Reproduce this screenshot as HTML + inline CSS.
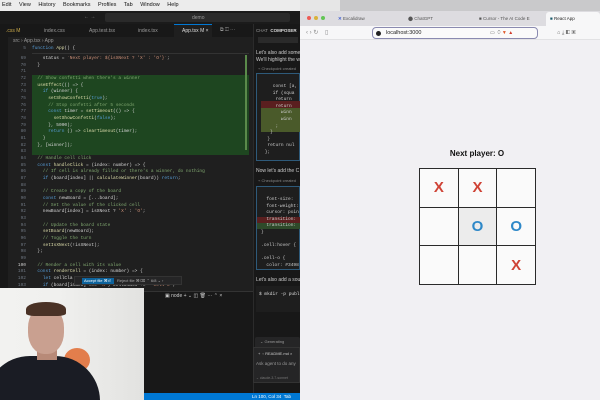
<!DOCTYPE html>
<html><head><meta charset="utf-8"><style>
*{margin:0;padding:0;box-sizing:border-box}
body{width:600px;height:400px;overflow:hidden;position:relative;background:#1f1f1f;font-family:"Liberation Sans",sans-serif}
.a{position:absolute}
.mono{font-family:"Liberation Mono",monospace}
.ln{position:absolute;left:0;width:26px;text-align:right;font-size:4.5px;color:#6e7681;font-family:"Liberation Mono",monospace}
.cd{position:absolute;left:32px;font-size:4.5px;color:#d4d4d4;white-space:pre;font-family:"Liberation Mono",monospace}
.cm{color:#7fa66f}
.kw{color:#569cd6}
.fn{color:#dcdcaa}
.st{color:#ce9178}
.t{font-size:5px;color:#bbb;white-space:nowrap}
.c{background:#fafafa;display:flex;align-items:center;justify-content:center;font-size:15px;font-weight:bold}
.x{color:#cf4336}.o{color:#2e88c8}
</style></head><body>
<div class="a" style="left:0;top:0;width:300px;height:11px;background:#ececec"></div>
<div class="a t" style="left:2px;top:2px;color:#111;font-size:5.5px;word-spacing:6px">Edit View History Bookmarks Profiles Tab Window Help</div>
<div class="a" style="left:0;top:11px;width:300px;height:13px;background:#1b1b1b"></div>
<div class="a" style="left:105px;top:13px;width:185px;height:9px;background:#2a2a2a;border-radius:2px"></div>
<div class="a t" style="left:192px;top:15px;color:#999">demo</div>
<div class="a t" style="left:84px;top:14px;color:#888">&larr; &rarr;</div>
<div class="a" style="left:0;top:24px;width:253px;height:13px;background:#181818"></div>
<div class="a" style="left:174px;top:24px;width:38px;height:13px;background:#1f1f1f;border-top:1px solid #0078d4"></div>
<div class="a t" style="left:6px;top:28px;color:#c8a84a">.css M</div>
<div class="a t" style="left:44px;top:28px;color:#999">index.css</div>
<div class="a t" style="left:89px;top:28px;color:#999">App.test.tsx</div>
<div class="a t" style="left:138px;top:28px;color:#999">index.tsx</div>
<div class="a t" style="left:182px;top:28px;color:#ddd">App.tsx M ×</div>
<div class="a t" style="left:220px;top:27px;color:#999">⧉ ◫ ···</div>
<div class="a t" style="left:13px;top:38px;color:#999">src › App.tsx › App</div>
<div class="a" style="left:0;top:37px;width:8px;height:256px;background:#181818"></div>
<div class="a" style="left:32px;top:75px;width:217px;height:80px;background:#1e4620"></div>
<div class="a" style="left:32px;top:46px;width:217px;height:8px;background:#1f1f1f;border-bottom:1px solid #333"></div>
<div class="a" style="left:245px;top:55px;width:2px;height:95px;background:#5a8a4a"></div>
<div class="ln" style="top:46px">5</div><div class="cd" style="top:46px"><span class="kw">function</span> <span class="fn">App</span>() {</div>
<div class="ln" style="top:56px">69</div><div class="cd" style="top:56px">    status = <span class="st">`Next player: ${isXNext ? 'X' : 'O'}`</span>;</div>
<div class="ln" style="top:62.7px">70</div><div class="cd" style="top:62.7px">  }</div>
<div class="ln" style="top:69.3px">71</div>
<div class="ln" style="top:76px">72</div><div class="cd cm" style="top:76px">  // Show confetti when there's a winner</div>
<div class="ln" style="top:82.7px">73</div><div class="cd" style="top:82.7px">  <span class="fn">useEffect</span>(() =&gt; {</div>
<div class="ln" style="top:89.3px">74</div><div class="cd" style="top:89.3px">    <span class="kw">if</span> (winner) {</div>
<div class="ln" style="top:96px">75</div><div class="cd" style="top:96px">      <span class="fn">setShowConfetti</span>(<span class="kw">true</span>);</div>
<div class="ln" style="top:102.7px">76</div><div class="cd cm" style="top:102.7px">      // Stop confetti after 5 seconds</div>
<div class="ln" style="top:109.3px">77</div><div class="cd" style="top:109.3px">      <span class="kw">const</span> timer = <span class="fn">setTimeout</span>(() =&gt; {</div>
<div class="ln" style="top:116px">78</div><div class="cd" style="top:116px">        <span class="fn">setShowConfetti</span>(<span class="kw">false</span>);</div>
<div class="ln" style="top:122.7px">79</div><div class="cd" style="top:122.7px">      }, 5000);</div>
<div class="ln" style="top:129.3px">80</div><div class="cd" style="top:129.3px">      <span class="kw">return</span> () =&gt; <span class="fn">clearTimeout</span>(timer);</div>
<div class="ln" style="top:136px">81</div><div class="cd" style="top:136px">    }</div>
<div class="ln" style="top:142.7px">82</div><div class="cd" style="top:142.7px">  }, [winner]);</div>
<div class="ln" style="top:149.3px">83</div>
<div class="ln" style="top:156px">84</div><div class="cd cm" style="top:156px">  // Handle cell click</div>
<div class="ln" style="top:162.7px">85</div><div class="cd" style="top:162.7px">  <span class="kw">const</span> <span class="fn">handleClick</span> = (index: number) =&gt; {</div>
<div class="ln" style="top:169.3px">86</div><div class="cd cm" style="top:169.3px">    // If cell is already filled or there's a winner, do nothing</div>
<div class="ln" style="top:176px">87</div><div class="cd" style="top:176px">    <span class="kw">if</span> (board[index] || <span class="fn">calculateWinner</span>(board)) <span class="kw">return</span>;</div>
<div class="ln" style="top:182.7px">88</div>
<div class="ln" style="top:189.3px">89</div><div class="cd cm" style="top:189.3px">    // Create a copy of the board</div>
<div class="ln" style="top:196px">90</div><div class="cd" style="top:196px">    <span class="kw">const</span> newBoard = [...board];</div>
<div class="ln" style="top:202.7px">91</div><div class="cd cm" style="top:202.7px">    // Set the value of the clicked cell</div>
<div class="ln" style="top:209.3px">92</div><div class="cd" style="top:209.3px">    newBoard[index] = isXNext ? <span class="st">'X'</span> : <span class="st">'O'</span>;</div>
<div class="ln" style="top:216px">93</div>
<div class="ln" style="top:222.7px">94</div><div class="cd cm" style="top:222.7px">    // Update the board state</div>
<div class="ln" style="top:229.3px">95</div><div class="cd" style="top:229.3px">    <span class="fn">setBoard</span>(newBoard);</div>
<div class="ln" style="top:236px">96</div><div class="cd cm" style="top:236px">    // Toggle the turn</div>
<div class="ln" style="top:242.7px">97</div><div class="cd" style="top:242.7px">    <span class="fn">setIsXNext</span>(!isXNext);</div>
<div class="ln" style="top:249.3px">98</div><div class="cd" style="top:249.3px">  };</div>
<div class="ln" style="top:256px">99</div>
<div class="ln" style="top:262.7px;color:#ccc">100</div><div class="cd cm" style="top:262.7px">  // Render a cell with its value</div>
<div class="ln" style="top:269.3px">101</div><div class="cd" style="top:269.3px">  <span class="kw">const</span> <span class="fn">renderCell</span> = (index: number) =&gt; {</div>
<div class="ln" style="top:276px">102</div><div class="cd" style="top:276px">    <span class="kw">let</span> cellCla</div>
<div class="ln" style="top:282.7px">103</div><div class="cd" style="top:282.7px">    <span class="kw">if</span> (board[index] === <span class="st">'X'</span>) cellClass += <span class="st">' cell-x'</span>;</div>
<div class="a" style="left:74px;top:276px;width:108px;height:9px;background:#252526;border:1px solid #333"></div>
<div class="a" style="left:82px;top:277.5px;width:32px;height:6px;background:#0e639c"></div>
<div class="a t" style="left:84px;top:278px;font-size:4px;color:#fff">Accept file ⌘⏎</div>
<div class="a t" style="left:117px;top:278px;font-size:4px;color:#aaa">Reject file ⌘⌫ ⌃ 6/8 ⌄ ›</div>
<div class="a" style="left:144px;top:291px;width:109px;height:102px;background:#181818;border-top:1px solid #333"></div>
<div class="a t" style="left:165px;top:293px;color:#ccc">▣ node + ⌄ ◫ 🗑 ··· ⌃ ×</div>
<div class="a" style="left:144px;top:393px;width:156px;height:7px;background:#0078d4"></div>
<div class="a t" style="left:252px;top:393.5px;font-size:4.5px;color:#fff">Ln 100, Col 34 &nbsp;Tab</div>
<div class="a" style="left:253px;top:24px;width:47px;height:369px;background:#181818;border-left:1px solid #2b2b2b"></div>
<div class="a t" style="left:256px;top:28px;font-size:4.5px;color:#999">CHAT &nbsp;<b style="color:#ddd">COMPOSER</b></div>
<div class="a" style="left:258px;top:37px;width:40px;height:6px;background:#2a2a2a"></div>
<div class="a t" style="left:256px;top:50px;font-size:5px;color:#ccc;line-height:7px">Let's also add some<br>We'll highlight the w</div>
<div class="a t" style="left:258px;top:66px;font-size:4px;color:#888">⌁ Checkpoint created</div>
<div class="a" style="left:256px;top:73px;width:44px;height:88px;background:#1e1e1e;border:1px solid #2e5a7a"></div>
<div class="a" style="left:261px;top:101px;width:39px;height:7px;background:#5a1f1f"></div>
<div class="a" style="left:261px;top:108px;width:39px;height:24px;background:#4a5a2a"></div>
<div class="a t mono" style="left:262px;top:84px;font-size:4.5px;color:#ccc;line-height:6.6px;white-space:pre">    const [a,
    if (squa
     return
     return
       winn
       winn
     ;
   }
  }
  return nul
 };</div>
<div class="a t" style="left:256px;top:168px;font-size:5px;color:#ccc">Now let's add the C</div>
<div class="a t" style="left:258px;top:178px;font-size:4px;color:#888">⌁ Checkpoint created</div>
<div class="a" style="left:256px;top:186px;width:44px;height:84px;background:#1e1e1e;border:1px solid #2e5a7a"></div>
<div class="a" style="left:257px;top:217px;width:43px;height:6px;background:#5a1f1f"></div>
<div class="a" style="left:257px;top:223px;width:43px;height:6px;background:#2e4a2a"></div>
<div class="a t mono" style="left:261px;top:197px;font-size:4.5px;color:#ccc;line-height:6.6px;white-space:pre">  font-size:
  font-weight:
  cursor: poin
  transition:
  transition:
}

.cell:hover {

.cell-o {
  color: #3498</div>
<div class="a t" style="left:256px;top:277px;font-size:5px;color:#ccc">Let's also add a sou</div>
<div class="a" style="left:256px;top:286px;width:44px;height:26px;background:#1e1e1e"></div>
<div class="a t mono" style="left:259px;top:292px;font-size:4.5px;color:#ddd">$ mkdir -p publ</div>
<div class="a" style="left:255px;top:337px;width:45px;height:10px;background:#252526;border-radius:2px 2px 0 0"></div>
<div class="a t" style="left:260px;top:339px;font-size:4px;color:#999">⌄ Generating</div>
<div class="a" style="left:253px;top:347px;width:47px;height:36px;background:#252526;border:1px solid #333"></div>
<div class="a t" style="left:258px;top:351px;font-size:4px;color:#ccc">+ &nbsp;▫ README.md ×</div>
<div class="a t" style="left:256px;top:361px;font-size:4.5px;color:#999">Ask agent to do any</div>
<div class="a t" style="left:256px;top:376px;font-size:3.5px;color:#777">⌄ claude-3.7-sonnet</div>
<div class="a" style="left:0;top:288px;width:144px;height:112px;background:linear-gradient(90deg,#f2f2f0 0%,#f0f0ee 40%,#e2e2e0 100%);overflow:hidden">
 <div class="a" style="left:64px;top:60px;width:26px;height:24px;border-radius:50%;background:#e06a30;opacity:.85"></div>
 <div class="a" style="left:-15px;top:68px;width:115px;height:60px;border-radius:45px 45px 0 0;background:#1a1c24"></div>
 <div class="a" style="left:37px;top:58px;width:20px;height:14px;background:#b88a78"></div>
 <div class="a" style="left:28px;top:18px;width:36px;height:48px;border-radius:45%;background:#c9a090"></div>
 <div class="a" style="left:26px;top:14px;width:40px;height:14px;border-radius:50% 50% 20% 20%;background:#4a3226"></div>
</div>
<div class="a" style="left:300px;top:0;width:300px;height:400px;background:#f1f0f3"></div>
<div class="a" style="left:300px;top:0;width:300px;height:11px;background:#c9c9cb"></div>
<div class="a" style="left:300px;top:0;width:40px;height:11px;background:#e6e6e6"></div>
<div class="a" style="left:300px;top:11px;width:300px;height:15px;background:#dddce0"></div>
<div class="a" style="left:546px;top:12px;width:54px;height:14px;background:#f7f7f8;border-radius:3px 3px 0 0"></div>
<div class="a" style="left:307px;top:16px;width:4px;height:4px;border-radius:50%;background:#ee5b55"></div>
<div class="a" style="left:314px;top:16px;width:4px;height:4px;border-radius:50%;background:#d9b23b"></div>
<div class="a" style="left:321px;top:16px;width:4px;height:4px;border-radius:50%;background:#62c554"></div>
<div class="a t" style="left:338px;top:15.5px;font-size:4.5px;color:#555"><b style="color:#3a5ad0">✕</b> Excalidraw</div>
<div class="a t" style="left:408px;top:15.5px;font-size:4.5px;color:#555">⬤ ChatGPT</div>
<div class="a t" style="left:479px;top:15.5px;font-size:4.5px;color:#555">■ Cursor - The AI Code E</div>
<div class="a t" style="left:550px;top:15.5px;font-size:4.5px;color:#222"><span style="color:#1a5a6a">■</span> React App</div>
<div class="a" style="left:300px;top:26px;width:300px;height:14px;background:#f7f7f8;border-bottom:1px solid #e2e2e4"></div>
<div class="a t" style="left:306px;top:29px;font-size:6px;color:#888">‹ › ↻ &nbsp;&nbsp;&nbsp;▯</div>
<div class="a" style="left:372px;top:27px;width:166px;height:12px;border:1px solid #8a8ab0;border-radius:4px;background:#fafafa"></div>
<div class="a" style="left:376px;top:30.5px;width:5px;height:5px;border-radius:50%;background:#222"></div>
<div class="a t" style="left:386px;top:30px;font-size:5.5px;color:#222">localhost:3000</div>
<div class="a t" style="left:490px;top:30px;font-size:5px;color:#666">▭ &nbsp;⍥ <span style="color:#e05a2a">▼</span> <span style="color:#d03a2a">▲</span></div>
<div class="a t" style="left:557px;top:30px;font-size:5.5px;color:#777">⌂ ⤓ ◧ ▣</div>
<div class="a" style="left:300px;top:149px;width:354px;text-align:center;font-weight:bold;font-size:8px;color:#111">Next player: O</div>
<div class="a" style="left:419px;top:168px;width:117px;height:117px;border:1px solid #2a2a2a;display:grid;grid-template-columns:repeat(3,1fr);grid-template-rows:repeat(3,1fr);gap:1px;background:#2a2a2a">
 <div class="c x">X</div><div class="c x">X</div><div class="c"></div>
 <div class="c"></div><div class="c o" style="background:#ececec">O</div><div class="c o">O</div>
 <div class="c"></div><div class="c"></div><div class="c x">X</div>
</div>
</body></html>
